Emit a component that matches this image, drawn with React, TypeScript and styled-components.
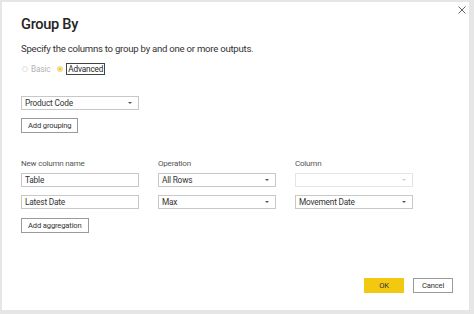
import React from "react";
import styled, { createGlobalStyle } from "styled-components";

const GlobalStyle = createGlobalStyle`
  html, body {
    margin: 0;
    padding: 0;
    background: #e6e6e6;
  }
  body {
    font-family: Roboto, "Noto Sans", sans-serif;
    color: #333;
  }
`;

const Screen = styled.div`
  width: 474px;
  height: 314px;
  padding: 2px 5px 4px 2px;
  box-sizing: border-box;
`;

const Dialog = styled.div`
  width: 467px;
  height: 308px;
  background: #fff;
  box-sizing: border-box;
  padding: 11px 16px 17px 19px;
  display: flex;
  flex-direction: column;
`;

const Header = styled.div`
  display: flex;
  justify-content: space-between;
  align-items: flex-start;
`;

const Title = styled.h1`
  margin: 0;
  font-size: 14.6px;
  letter-spacing: -0.3px;
  line-height: 22px;
  font-weight: 500;
  color: #252423;
`;

const Close = styled.button`
  border: 0;
  background: none;
  padding: 0;
  margin: -9px -15px 0 0;
  width: 12px;
  height: 12px;
  display: flex;
  align-items: center;
  justify-content: center;
  cursor: pointer;
`;

const Subtitle = styled.p`
  margin: 7px 0 0;
  font-size: 9.6px;
  letter-spacing: -0.25px;
  line-height: 14px;
  color: #333;
`;

const RadioRow = styled.div`
  display: flex;
  align-items: center;
  gap: 6px;
  margin-top: 7px;
  height: 12px;
`;

const Radio = styled.label<{ disabled?: boolean }>`
  display: flex;
  align-items: center;
  gap: 3px;
  font-size: 8.2px;
  letter-spacing: -0.15px;
  color: ${({ disabled }) => (disabled ? "#b3b3b3" : "#252423")};
`;

const Dot = styled.span<{ checked?: boolean }>`
  width: 6px;
  height: 6px;
  border-radius: 50%;
  box-sizing: border-box;
  border: 1px solid ${({ checked }) => (checked ? "#eadc9c" : "#e0e0e0")};
  background: ${({ checked }) => (checked ? "#f2c811" : "#fff")};
  box-shadow: ${({ checked }) => (checked ? "inset 0 0 0 0.5px #fff" : "none")};
  margin-left: 1px;
`;

const FocusText = styled.span`
  border: 1px solid #444;
  padding: 0 1px;
  line-height: 10px;
`;

const Select = styled.div<{ disabled?: boolean }>`
  width: 118px;
  height: 14px;
  box-sizing: border-box;
  border: 1px solid ${({ disabled }) => (disabled ? "#e4e4e4" : "#c8c8c8")};
  background: #fff;
  display: flex;
  align-items: center;
  justify-content: space-between;
  padding: 0 6px 0 3px;
  font-size: 8.3px;
  letter-spacing: -0.2px;
  color: #333;
`;

const Arrow = styled.span<{ disabled?: boolean }>`
  width: 0;
  height: 0;
  border-left: 2px solid transparent;
  border-right: 2px solid transparent;
  border-top: 2px solid ${({ disabled }) => (disabled ? "#cfcfcf" : "#555")};
`;

const Input = styled.div`
  width: 118px;
  height: 14px;
  box-sizing: border-box;
  border: 1px solid #c8c8c8;
  display: flex;
  align-items: center;
  padding: 0 3px;
  font-size: 8.3px;
  letter-spacing: -0.2px;
  color: #333;
`;

const Button = styled.button<{ primary?: boolean }>`
  font-family: inherit;
  font-size: 7.6px;
  letter-spacing: -0.15px;
  height: 15px;
  box-sizing: border-box;
  padding: 0 6px;
  border: 1px solid ${({ primary }) => (primary ? "#f2c811" : "#9a9a9a")};
  background: ${({ primary }) => (primary ? "#f2c811" : "#fff")};
  color: #333;
  display: flex;
  align-items: center;
  justify-content: center;
  cursor: pointer;
`;

const Stack = styled.div<{ top: number }>`
  display: flex;
  flex-direction: column;
  align-items: flex-start;
  gap: 8px;
  margin-top: ${({ top }) => top}px;
`;

const Grid = styled.div`
  display: grid;
  grid-template-columns: repeat(3, 118px);
  column-gap: 19px;
  row-gap: 8px;
  margin-top: 25px;
`;

const ColLabel = styled.div`
  font-size: 8px;
  letter-spacing: -0.2px;
  line-height: 12px;
  color: #555;
  margin-bottom: -5px;
`;

const Footer = styled.div`
  margin-top: auto;
  display: flex;
  justify-content: flex-end;
  gap: 9px;
`;

const FooterButton = styled(Button)`
  width: 40px;
`;

const Dropdown: React.FC<{ value?: string; disabled?: boolean }> = ({ value, disabled }) => (
  <Select disabled={disabled}>
    <span>{value}</span>
    <Arrow disabled={disabled} />
  </Select>
);

export default function App() {
  return (
    <Screen>
      <GlobalStyle />
      <Dialog>
        <Header>
          <Title>Group By</Title>
          <Close aria-label="Close">
            <svg width="8" height="8" viewBox="0 0 8 8">
              <path d="M0.5 0.5 L7.5 7.5 M7.5 0.5 L0.5 7.5" stroke="#666" strokeWidth="1" />
            </svg>
          </Close>
        </Header>
        <Subtitle>Specify the columns to group by and one or more outputs.</Subtitle>
        <RadioRow>
          <Radio disabled>
            <Dot />
            Basic
          </Radio>
          <Radio>
            <Dot checked />
            <FocusText>Advanced</FocusText>
          </Radio>
        </RadioRow>

        <Stack top={21}>
          <Dropdown value="Product Code" />
          <Button>Add grouping</Button>
        </Stack>

        <Grid>
          <ColLabel>New column name</ColLabel>
          <ColLabel>Operation</ColLabel>
          <ColLabel>Column</ColLabel>
          <Input>Table</Input>
          <Dropdown value="All Rows" />
          <Dropdown disabled />
          <Input>Latest Date</Input>
          <Dropdown value="Max" />
          <Dropdown value="Movement Date" />
        </Grid>
        <Stack top={9}>
          <Button>Add aggregation</Button>
        </Stack>

        <Footer>
          <FooterButton primary>OK</FooterButton>
          <FooterButton>Cancel</FooterButton>
        </Footer>
      </Dialog>
    </Screen>
  );
}
